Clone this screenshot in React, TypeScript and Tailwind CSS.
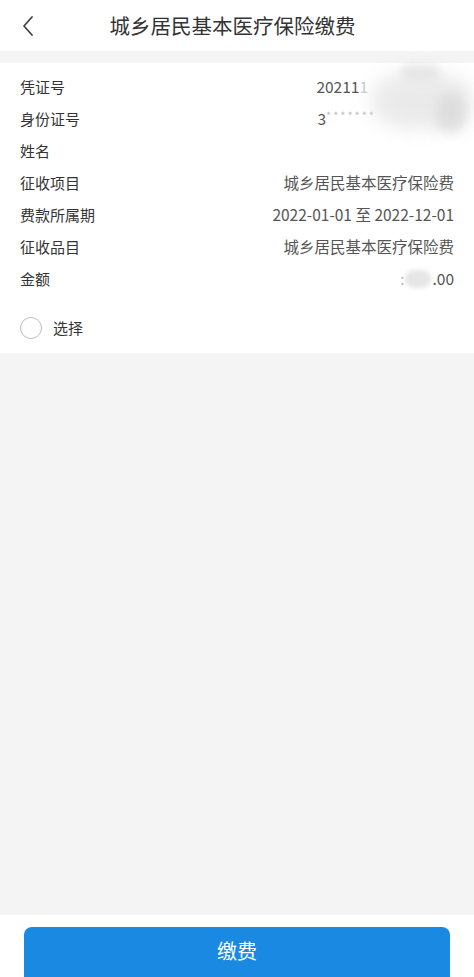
import React from 'react';

const rows: { label: string; value: React.ReactNode }[] = [
  { label: '凭证号', value: <span className="mr-[86px]">20211<span className="text-[#c8c8c8]">1</span></span> },
  { label: '身份证号', value: <span className="mr-[78px]">3<span className="text-[#c0c0c0] text-[11px] tracking-[2px] align-top">*******</span></span> },
  { label: '姓名', value: '' },
  { label: '征收项目', value: '城乡居民基本医疗保险费' },
  { label: '费款所属期', value: '2022-01-01 至 2022-12-01' },
  { label: '征收品目', value: '城乡居民基本医疗保险费' },
  {
    label: '金额',
    value: (
      <span className="flex items-center">
        <span className="text-[#bbb]">:</span>
        <span className="mx-[1px] inline-block h-[18px] w-[26px] rounded-full bg-[#e6e6e6] blur-[2px]" />
        <span>.00</span>
      </span>
    ),
  },
];

export default function App() {
  return (
    <div
      className="flex h-[977px] w-[474px] flex-col overflow-hidden bg-[#f4f4f4] text-[#333]"
      style={{ fontFamily: '"Noto Sans CJK SC", "Noto Sans", sans-serif' }}
    >
      {/* Header */}
      <div className="relative flex h-[51px] shrink-0 items-center justify-center bg-white">
        <svg className="absolute left-[20px] top-[14px]" width="16" height="24" viewBox="0 0 16 24" fill="none">
          <path d="M12 3 L4 12 L12 21" stroke="#444" strokeWidth="1.8" strokeLinecap="round" strokeLinejoin="round" />
        </svg>
        <h1 className="mr-[9px] text-[20.5px] font-normal text-[#333]">城乡居民基本医疗保险缴费</h1>
      </div>
      <div className="h-[12px] shrink-0" />

      {/* Detail card */}
      <div className="relative shrink-0 bg-white pt-[8px] pb-[9px]">
        {rows.map((r) => (
          <div key={r.label} className="flex h-[32px] items-center justify-between px-[20px] text-[15px]">
            <span className="text-[#333]">{r.label}</span>
            <span className="text-[15.5px] text-[#555]">{r.value}</span>
          </div>
        ))}
        <div className="mt-[17px] flex h-[32px] items-center pl-[20px]">
          <span className="h-[22px] w-[22px] rounded-full border border-[#bdbdbd]" />
          <span className="ml-[11px] text-[15px] text-[#333]">选择</span>
        </div>
        {/* blurred smudge over the id values */}
        <div className="pointer-events-none absolute left-[372px] top-[10px] h-[56px] w-[100px] rounded-[40%] bg-[#e2e2e2] opacity-70 blur-[9px]" />
        <div className="pointer-events-none absolute left-[400px] top-[2px] h-[16px] w-[40px] rounded-full bg-[#e4e4e4] opacity-80 blur-[4px]" />
        <div className="pointer-events-none absolute left-[436px] top-[30px] h-[40px] w-[30px] rounded-full bg-[#d8d8d8] opacity-70 blur-[6px]" />
      </div>

      <div className="flex-1" />

      {/* Footer */}
      <div className="flex h-[62px] shrink-0 items-start justify-center bg-white pt-[12px]">
        <button className="flex h-[60px] w-[426px] items-start justify-center rounded-[8px] bg-[#1a89e2] pt-[9px] text-[20px] text-white">
          缴费
        </button>
      </div>
    </div>
  );
}
